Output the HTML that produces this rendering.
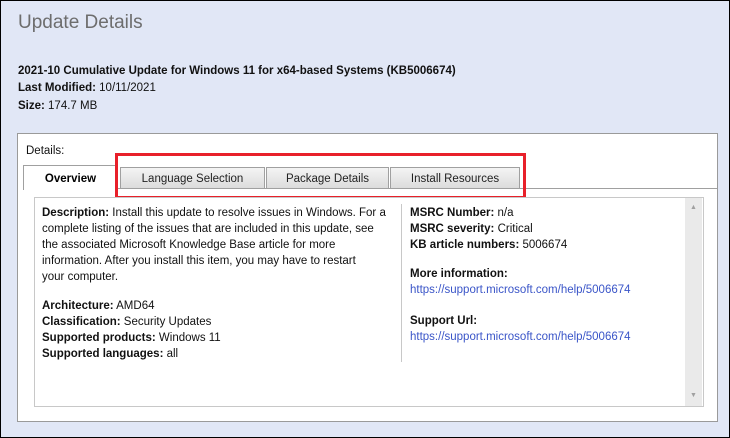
<!DOCTYPE html><html><head><style>
body{margin:0;width:730px;height:438px;overflow:hidden;font-family:"Liberation Sans",sans-serif;}
.root{position:absolute;left:0;top:0;width:728px;height:436px;border:1px solid #000;background:#e1e7f6;}
.a{position:absolute;white-space:nowrap;}
b{font-weight:bold;}
.t{font-size:11.5px;color:#111;line-height:16px;}
a{color:#3a55c8;text-decoration:none;}
.tab{position:absolute;top:166px;height:20px;border:1px solid #a0a0a0;border-bottom:none;background:linear-gradient(#f4f4f4,#dcdcdc);font-size:11.5px;text-align:center;line-height:22px;color:#222;}
</style></head><body><div class="root">
<div class="a" style="left:17px;top:11px;font-size:19px;color:#6d6d6d;">Update Details</div>
<div class="a t" style="left:17px;top:62px;"><b>2021-10 Cumulative Update for Windows 11 for x64-based Systems (KB5006674)</b></div>
<div class="a t" style="left:17px;top:79px;"><b>Last Modified:</b> 10/11/2021</div>
<div class="a t" style="left:17px;top:97px;"><b>Size:</b> 174.7 MB</div>
<div class="a" style="left:16px;top:132px;width:699px;height:287px;background:#fff;border:1px solid #9a9a9a;"></div>
<div class="a t" style="left:25px;top:142px;">Details:</div>
<div class="a" style="left:22px;top:187px;width:694px;height:1px;background:#a0a0a0;"></div>
<div class="a" style="left:22px;top:164px;width:93px;height:24px;background:#fff;border:1px solid #a0a0a0;border-bottom:none;font-size:11.5px;font-weight:bold;text-align:center;line-height:26px;">Overview</div>
<div class="tab" style="left:119px;width:143px;">Language Selection</div>
<div class="tab" style="left:265px;width:121px;">Package Details</div>
<div class="tab" style="left:389px;width:128px;">Install Resources</div>
<div class="a" style="left:114px;top:152px;width:405px;height:40px;border:3px solid #e8202a;"></div>
<div class="a" style="left:33px;top:196px;width:668px;height:208px;border:1px solid #c8c8c8;background:#fff;"></div>
<div class="a" style="left:684px;top:197px;width:17px;height:208px;background:#eaeaea;"></div>
<div class="a" style="left:689px;top:203px;font-size:7px;color:#a0a0a0;">▲</div>
<div class="a" style="left:689px;top:391px;font-size:7px;color:#a0a0a0;">▼</div>
<div class="a" style="left:400px;top:203px;width:1px;height:158px;background:#c8c8c8;"></div>
<div class="a t" style="left:41px;top:204px;"><b>Description:</b> Install this update to resolve issues in Windows. For a<br>complete listing of the issues that are included in this update, see<br>the associated Microsoft Knowledge Base article for more<br>information. After you install this item, you may have to restart<br>your computer.</div>
<div class="a t" style="left:41px;top:297px;"><b>Architecture:</b> AMD64<br><b>Classification:</b> Security Updates<br><b>Supported products:</b> Windows 11<br><b>Supported languages:</b> all</div>
<div class="a t" style="left:409px;top:204px;"><b>MSRC Number:</b> n/a<br><b>MSRC severity:</b> Critical<br><b>KB article numbers:</b> 5006674</div>
<div class="a t" style="left:409px;top:265px;"><b>More information:</b><br><a>https://support.microsoft.com/help/5006674</a></div>
<div class="a t" style="left:409px;top:312px;"><b>Support Url:</b><br><a>https://support.microsoft.com/help/5006674</a></div>
</div></body></html>
